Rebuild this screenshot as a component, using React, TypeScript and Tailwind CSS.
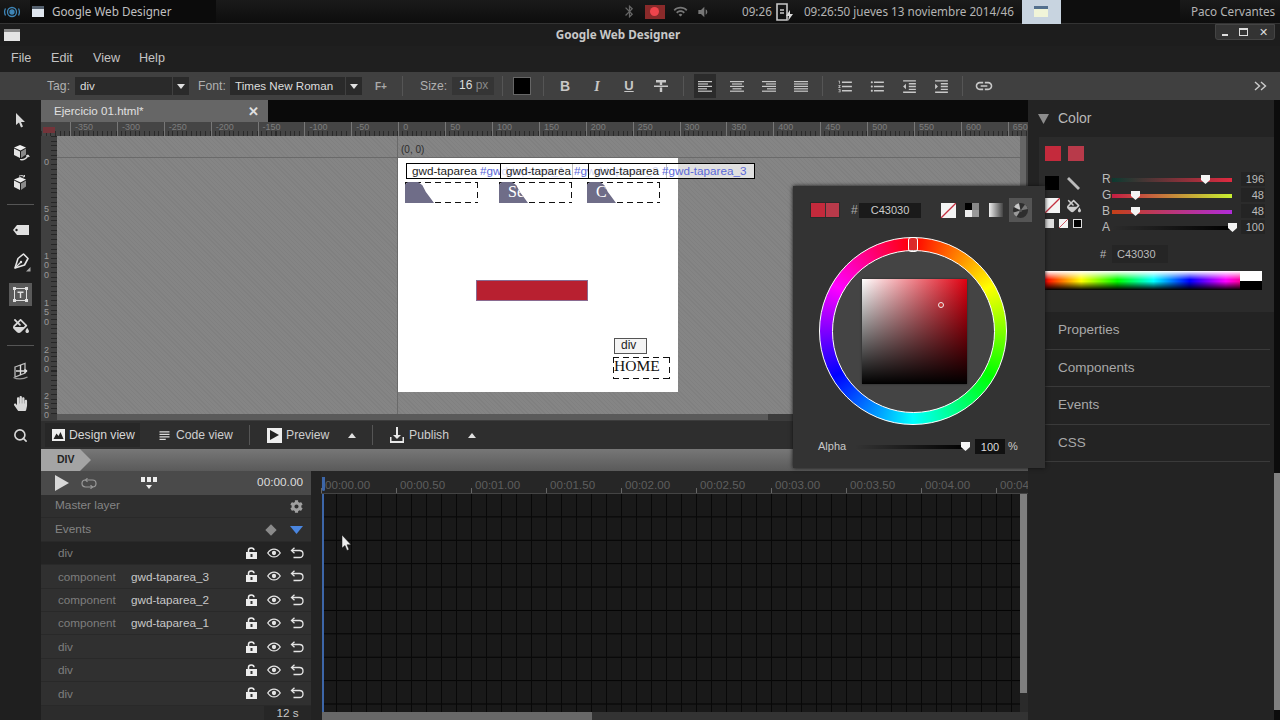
import React from "react";
import { FaFillDrip, FaHandPaper, FaCog } from "react-icons/fa";
import { MdLink, MdFormatListBulleted, MdFormatListNumbered, MdFormatIndentDecrease, MdFormatIndentIncrease, MdBluetooth, MdWifi, MdVolumeDown, MdSubject } from "react-icons/md";
import { Search } from "lucide-react";

const Sep = ({ cls = "" }: { cls?: string }) => <div className={"w-px h-[20px] bg-[#555] shrink-0 " + cls} />;

const Caret = ({ up = false, cls = "" }: { up?: boolean; cls?: string }) => (
  <svg width="8" height="5" viewBox="0 0 8 5" className={cls}>
    <path d={up ? "M0 5L4 0L8 5Z" : "M0 0L8 0L4 5Z"} fill="#e0e0e0" />
  </svg>
);

const Lines = ({ kind }: { kind: "l" | "c" | "r" | "j" }) => {
  const rows = [0, 1, 2, 3, 4];
  const widths = kind === "j" ? [14, 14, 14, 14, 14] : [14, 10, 14, 9, 14];
  return (
    <svg width="14" height="11" viewBox="0 0 14 11">
      {rows.map((r) => {
        const w = widths[r];
        const x = kind === "l" || kind === "j" ? 0 : kind === "r" ? 14 - w : (14 - w) / 2;
        return <rect key={r} x={x} y={r * 2.4} width={w} height="1.2" fill="#c8c8c8" />;
      })}
    </svg>
  );
};

const ToolBtn = ({ children }: { children: React.ReactNode }) => (
  <div className="w-[32px] h-[28px] shrink-0 flex items-center justify-center text-[#c8c8c8]">{children}</div>
);

const Tool = ({ children, active = false }: { children: React.ReactNode; active?: boolean }) => (
  <div className="h-[32px] w-[41px] flex items-center justify-center text-[#d8d8d8]">
    <div className={"w-[23px] h-[23px] flex items-center justify-center " + (active ? "bg-[#5a5a5a]" : "")}>{children}</div>
  </div>
);

const NoneSwatch = ({ cls }: { cls: string }) => (
  <svg viewBox="0 0 16 16" className={cls}>
    <rect width="16" height="16" fill="#f4f4f4" />
    <path d="M0 16L16 0" stroke="#c43040" strokeWidth="1.4" />
  </svg>
);

const Cube = ({ arrow }: { arrow: "bottom" | "top" }) => (
  <svg width="18" height="18" viewBox="0 0 18 18" fill="none">
    <path d="M2 4.5L8 2L14 4.5L8.5 7.5Z" fill="#f0f0f0" />
    <path d="M2 5.5L8 8.5V15L2 12Z" fill="#e4e4e4" />
    <path d="M9 8.5L14 5.5V11.5L9 15Z" fill="#8a8a8a" />
    {arrow === "bottom" ? (
      <path d="M8 16.5C11.5 17.5 15 15.5 16 12M16 12L14.2 13.2M16 12L17.2 14" stroke="#e0e0e0" strokeWidth="1.3" />
    ) : (
      <path d="M7 1.2C9 .2 11 .5 12.5 1.6M12.5 1.6L10.8 2M12.5 1.6L12.4 0" stroke="#e0e0e0" strokeWidth="1" />
    )}
  </svg>
);

const Pen = () => (
  <svg width="20" height="20" viewBox="0 0 20 20" fill="none">
    <path d="M12.5 2L17 6.5L13.5 13L4 16L7 6.5Z" stroke="#e4e4e4" strokeWidth="1.6" strokeLinejoin="round" />
    <path d="M4 16L9.5 10.5" stroke="#e4e4e4" strokeWidth="1.2" />
    <circle cx="10" cy="10" r="1.2" fill="#e4e4e4" />
    <path d="M19.5 15V19.5H15Z" fill="#aaa" />
  </svg>
);

const Stage = () => (
  <svg width="18" height="18" viewBox="0 0 18 18" fill="none">
    <path d="M3 5L13 1.5V11L3 15Z" stroke="#bbb" strokeWidth="1.3" />
    <path d="M8.5 3V13M4 9H15M15 9L12.5 7.2M15 9L12.5 10.8" stroke="#ddd" strokeWidth="1.4" />
    <path d="M1.5 15.5C5 17.5 11 17.5 15.5 15" stroke="#999" strokeWidth="1.3" />
  </svg>
);

const Lock = () => (
  <svg width="11" height="12" viewBox="0 0 11 12" fill="none">
    <path d="M2.5 5.5V3.3C2.5 1.8 3.8 1 5.3 1C6.8 1 8 1.8 8 3.3" stroke="#ececec" strokeWidth="1.5" />
    <path d="M0 5H11V12H0Z" fill="#ececec" />
    <rect x="4.5" y="7" width="2" height="3" fill="#333" />
  </svg>
);

const Eye = () => (
  <svg width="15" height="10" viewBox="0 0 15 10" fill="none">
    <path d="M.8 5C2.8 2 5 .8 7.5 .8C10 .8 12.2 2 14.2 5C12.2 8 10 9.2 7.5 9.2C5 9.2 2.8 8 .8 5Z" stroke="#e4e4e4" strokeWidth="1.4" />
    <circle cx="7.5" cy="5" r="2.3" fill="#e4e4e4" />
  </svg>
);

const Back = () => (
  <svg width="14" height="12" viewBox="0 0 14 12" fill="none">
    <path d="M2 3.5H9.5C11.5 3.5 13 5 13 7C13 9 11.5 10.5 9.5 10.5H3.5" stroke="#e4e4e4" strokeWidth="1.3" />
    <path d="M4.5 .8L1.5 3.5L4.5 6.2" stroke="#e4e4e4" strokeWidth="1.3" />
  </svg>
);

const topLabels = ["-350", "-300", "-250", "-200", "-150", "-100", "-50", "0", "50", "100", "150", "200", "250", "300", "350", "400", "450", "500", "550", "600", "650"];
const leftLabels = ["0", "50", "100", "150", "200", "250"];
const timeLabels = ["00:00.00", "00:00.50", "00:01.00", "00:01.50", "00:02.00", "00:02.50", "00:03.00", "00:03.50", "00:04.00"];
const layers = [
  ["div", "", true],
  ["component", "gwd-taparea_3", false],
  ["component", "gwd-taparea_2", false],
  ["component", "gwd-taparea_1", false],
  ["div", "", false],
  ["div", "", false],
  ["div", "", false],
] as const;

const sliders = [
  { l: "R", v: "196", g: "bg-[linear-gradient(to_right,#0c3a30,#e02a40)]", p: "left-[89px]" },
  { l: "G", v: "48", g: "bg-[linear-gradient(to_right,#c41c44,#c8f030)]", p: "left-[19px]" },
  { l: "B", v: "48", g: "bg-[linear-gradient(to_right,#c44018,#b02cd8)]", p: "left-[19px]" },
  { l: "A", v: "100", g: "bg-[linear-gradient(to_right,transparent,#000)]", p: "left-[116px]" },
];

const Thumb = ({ cls = "" }: { cls?: string }) => (
  <svg width="9" height="9" viewBox="0 0 9 9" className={cls}>
    <path d="M0 0H9V5L4.5 9L0 5Z" fill="#f4f4f4" />
  </svg>
);

const dashed =
  "bg-[linear-gradient(to_right,#111_6px,transparent_6px),linear-gradient(to_right,#111_6px,transparent_6px),linear-gradient(to_bottom,#111_6px,transparent_6px),linear-gradient(to_bottom,#111_6px,transparent_6px)] [background-size:10px_1px,10px_1px,1px_10px,1px_10px] [background-position:0_0,0_100%,0_0,100%_0] [background-repeat:repeat-x,repeat-x,repeat-y,repeat-y]";

function CanvasLabel({ x, name, id }: { x: string; name: string; id: string }) {
  return (
    <div className={"absolute top-[27px] w-[167px] h-[16px] border border-black bg-white/75 flex items-center pl-[5px] text-[11.7px] whitespace-nowrap overflow-hidden " + x}>
      <span className="text-[#222]">{name}</span>
      <span className="text-[#5a68d8] ml-[3px]">{id}</span>
    </div>
  );
}

function DashBox({ x, t }: { x: string; t: string }) {
  return (
    <div className={"absolute top-[46px] w-[73px] h-[21px] " + dashed + " " + x}>
      <div className="w-[29px] h-[21px] bg-[#6f6d88] [clip-path:polygon(0_12%,10%_0,45%_0,60%_15%,72%_48%,85%_72%,100%_100%,0_100%)] text-white text-[16px] pl-[9px] leading-[20px] font-['Liberation_Serif',serif] overflow-hidden">{t}</div>
    </div>
  );
}

export default function App() {
  return (
    <div className="relative w-[1280px] h-[720px] overflow-hidden bg-[#1e1e1e] flex flex-col font-['Liberation_Sans',Arial,sans-serif] text-[#ccc]">
      {/* OS panel */}
      <div className="h-[24px] shrink-0 flex items-center bg-[linear-gradient(to_bottom,#1a1a1a,#0d0d0d)] border-b border-[#333] font-['Noto_Sans',sans-serif] text-[11.7px] text-[#b4b4b4]">
        <div className="w-[30px] flex justify-center pr-[6px]">
          <svg width="18" height="18" viewBox="0 0 18 18" fill="none" stroke="#3f86b8" strokeWidth="1.3">
            <circle cx="9" cy="9" r="2" fill="#3f86b8" />
            <circle cx="9" cy="9" r="4.5" />
            <path d="M2.5 5.5A7.5 7.5 0 0 0 2.5 12.5M15.5 5.5A7.5 7.5 0 0 1 15.5 12.5" />
          </svg>
        </div>
        <div className="w-[186px] h-full bg-[#0b0b0b] flex items-center pl-[2px]">
          <div className="w-[12px] h-[11px] bg-[#dfe6ee] border-t-[3px] border-[#54606e]" />
          <span className="ml-[8px] text-[#c0c0c0]">Google Web Designer</span>
        </div>
        <div className="ml-[406px] flex items-center w-[66px] justify-between">
          <MdBluetooth size={15} color="#666" />
          <div className="w-[20px] h-[14px] bg-[#8a2a2a] flex items-center justify-center -ml-[1px]"><div className="w-[9px] h-[9px] rounded-full bg-[#f0444c]" /></div>
          <MdWifi size={15} color="#777" />
        </div>
        <MdVolumeDown size={16} color="#777" className="ml-[7px]" />
        <span className="ml-[31px]">09:26</span>
        <svg width="20" height="20" viewBox="0 0 20 20" fill="none" className="ml-[3px]">
          <path d="M2 2H12V18H2Z" stroke="#c8c8c8" strokeWidth="1.6" />
          <path d="M5 8H9M5 11H9" stroke="#c8c8c8" strokeWidth="1.5" />
          <path d="M15 8L11 14H14L13 19L18 12H15Z" fill="#d8d8d8" />
        </svg>
        <span className="ml-[9px] w-[214px] whitespace-nowrap">09:26:50 jueves 13 noviembre 2014/46</span>
        <div className="ml-[4px] w-[39px] h-[24px] bg-[#c8d4e0] flex items-center justify-center">
          <div className="w-[14px] h-[11px] bg-[#f0f4d8] border-t-[3px] border-[#54708e]" />
        </div>
        <div className="w-[119px] h-full bg-[#0e0e0e]" />
        <span className="ml-[11px] w-[88px] overflow-hidden whitespace-nowrap">Paco Cervantes</span>
      </div>

      {/* Title bar */}
      <div className="relative h-[22px] shrink-0 flex items-center justify-center bg-[#1d1d1d] pr-[44px]">
        <div className="absolute left-[4px] top-[5px] w-[16px] h-[12px] bg-[#e4e4e4] border-t-[3px] border-[#8a8a8a]" />
        <span className="text-[11.7px] font-bold text-[#c8c8c8] font-['Noto_Sans',sans-serif]">Google Web Designer</span>
        <div className="absolute left-[1215px] top-0 w-[60px] h-[16px] bg-[#333] border border-[#444] rounded-b-[3px] flex items-center justify-around text-[#ddd] text-[11px]">
          <div className="w-[6px] h-[2px] bg-[#ddd] mt-[5px]" />
          <div className="w-[9px] h-[8px] border border-[#ddd] border-t-2" />
          <span className="leading-none">✕</span>
        </div>
      </div>

      {/* Menu */}
      <div className="h-[26px] shrink-0 flex items-center bg-[#1f1f1f] text-[12.6px] text-[#c4c4c4] pb-[2px]">
        <span className="ml-[11px] w-[40px]">File</span>
        <span className="w-[42px]">Edit</span>
        <span className="w-[46px]">View</span>
        <span>Help</span>
      </div>

      {/* Toolbar */}
      <div className="h-[28px] shrink-0 flex items-center bg-[#404040] text-[12.2px] text-[#b0b0b0]">
        <span className="ml-[47px] w-[28px]">Tag:</span>
        <div className="w-[114px] h-[18px] flex">
          <div className="flex-1 bg-[#2a2a2a] pl-[5px] text-[#ddd] leading-[18px] text-[11.6px]">div</div>
          <div className="w-[16px] ml-px bg-[#2a2a2a] flex items-center justify-center"><Caret /></div>
        </div>
        <span className="ml-[9px] w-[32px]">Font:</span>
        <div className="w-[132px] h-[18px] flex">
          <div className="flex-1 bg-[#2a2a2a] pl-[5px] text-[#ddd] leading-[18px] text-[11.6px]">Times New Roman</div>
          <div className="w-[16px] ml-px bg-[#2a2a2a] flex items-center justify-center"><Caret /></div>
        </div>
        <span className="w-[38px] text-center text-[10px] font-bold text-[#aaa]">F+</span>
        <Sep cls="ml-[2px]" />
        <span className="ml-[17px] w-[32px]">Size:</span>
        <div className="w-[42px] h-[18px] bg-[#353535] pl-[7px] text-[12px] leading-[17px] text-[#ddd]">16 <span className="text-[#888]">px</span></div>
        <Sep cls="ml-[8px]" />
        <div className="ml-[10px] w-[18px] h-[18px] bg-black border border-[#666]" />
        <Sep cls="ml-[12px]" />
        <div className="ml-[5px] flex">
          <ToolBtn><span className="font-bold text-[14px]">B</span></ToolBtn>
          <ToolBtn><span className="italic font-bold text-[14px] font-['Liberation_Serif',serif]">I</span></ToolBtn>
          <ToolBtn><span className="underline font-bold text-[13px]">U</span></ToolBtn>
          <ToolBtn>
            <svg width="14" height="14" viewBox="0 0 14 14" fill="#c8c8c8"><path d="M2 1H12V3.5H8.2V6H5.8V3.5H2ZM0 6.5H14V8H0ZM5.8 8.5H8.2V13H5.8Z" /></svg>
          </ToolBtn>
        </div>
        <Sep cls="ml-[6px]" />
        <div className="ml-[5px] flex">
          <ToolBtn><div className="w-[22px] h-[24px] bg-[#2b2b2b] flex items-center justify-center"><Lines kind="l" /></div></ToolBtn>
          <ToolBtn><Lines kind="c" /></ToolBtn>
          <ToolBtn><Lines kind="r" /></ToolBtn>
          <ToolBtn><Lines kind="j" /></ToolBtn>
        </div>
        <Sep cls="ml-[5px]" />
        <div className="ml-[6px] flex">
          <ToolBtn><MdFormatListNumbered size={17} /></ToolBtn>
          <ToolBtn><MdFormatListBulleted size={17} /></ToolBtn>
          <ToolBtn><MdFormatIndentDecrease size={17} /></ToolBtn>
          <ToolBtn><MdFormatIndentIncrease size={17} /></ToolBtn>
        </div>
        <Sep cls="ml-[5px]" />
        <div className="ml-[5px]"><ToolBtn><MdLink size={20} /></ToolBtn></div>
        <svg width="13" height="10" viewBox="0 0 13 10" fill="none" stroke="#ccc" strokeWidth="1.4" className="ml-auto mr-[13px]">
          <path d="M1 1L5.5 5L1 9M7 1L11.5 5L7 9" />
        </svg>
      </div>

      {/* Main */}
      <div className="flex-1 flex min-h-0">
        {/* Left tools */}
        <div className="w-[41px] shrink-0 bg-[#1f1f1f] pt-[4px] flex flex-col items-center">
          <Tool><svg width="13" height="15" viewBox="0 0 13 15"><path d="M2 0V12L5 9.5L7 14.5L9 13.5L7 9H11Z" fill="#d8d8d8" /></svg></Tool>
          <Tool><Cube arrow="bottom" /></Tool>
          <Tool><Cube arrow="top" /></Tool>
          <div className="w-[27px] h-px bg-[#555] mt-[4px] mb-[9px]" />
          <Tool><svg width="16" height="10" viewBox="0 0 16 10"><path d="M4 0H16V10H4L0 5Z" fill="#e0e0e0" /><circle cx="3.5" cy="5" r="1.2" fill="#1f1f1f" /></svg></Tool>
          <Tool><Pen /></Tool>
          <Tool active>
            <svg width="15" height="15" viewBox="0 0 15 15" fill="none">
              <rect x="1.5" y="1.5" width="12" height="12" stroke="#e0e0e0" />
              <rect x="0" y="0" width="3" height="3" fill="#e0e0e0" /><rect x="12" y="0" width="3" height="3" fill="#e0e0e0" />
              <rect x="0" y="12" width="3" height="3" fill="#e0e0e0" /><rect x="12" y="12" width="3" height="3" fill="#e0e0e0" />
              <path d="M4.5 4.5H10.5V6H8.2V11H6.8V6H4.5Z" fill="#e0e0e0" />
            </svg>
          </Tool>
          <Tool><FaFillDrip size={16} /></Tool>
          <div className="w-[27px] h-px bg-[#555] mt-[3px] mb-[9px]" />
          <Tool><Stage /></Tool>
          <Tool><FaHandPaper size={15} /></Tool>
          <Tool><Search size={15} strokeWidth={2.6} /></Tool>
        </div>

        {/* Center */}
        <div className="w-[987px] shrink-0 flex flex-col min-h-0">
          {/* Tabs */}
          <div className="h-[22px] shrink-0 bg-[#0a0a0a] flex">
            <div className="w-[227px] bg-[#666] flex items-center justify-between pl-[13px] pr-[9px] text-[11.6px] text-[#e0e0e0]">
              <span>Ejercicio 01.html*</span>
              <span className="font-bold text-[13px] leading-none">✕</span>
            </div>
            <div className="flex-1" />
          </div>
          {/* Ruler */}
          <div className="h-[14px] shrink-0 flex bg-[#454545] bg-[repeating-linear-gradient(to_right,#2a2a2a_0,#2a2a2a_1px,transparent_1px,transparent_4.69px)] bg-[size:100%_5px] bg-no-repeat bg-bottom overflow-hidden">
            <div className="w-[29px] shrink-0 pl-[2px] pt-[5px]"><div className="w-[12px] h-[6px] bg-[#74343a]" /></div>
            {topLabels.map((t) => (
              <div key={t} className="w-[46.9px] shrink-0 border-l border-[#777] pl-[4px] text-[9px] leading-[11px] text-[#7e7e7e]">{t}</div>
            ))}
          </div>
          {/* Canvas row */}
          <div className="h-[278px] shrink-0 flex">
            <div className="relative z-10 w-[16px] shrink-0 bg-[#404040] bg-[repeating-linear-gradient(to_bottom,#262626_0,#262626_1px,transparent_1px,transparent_4.69px)] bg-[size:6px_100%] bg-no-repeat bg-right pt-[22px] flex flex-col">
              {leftLabels.map((t) => (
                <div key={t} className="h-[46.9px] shrink-0 pl-[3px] text-[9px] leading-[9.5px] text-[#9a9a9a] flex flex-col">
                  {t.split("").map((c, i) => <span key={i}>{c}</span>)}
                </div>
              ))}
            </div>
            <div className="relative flex-1 overflow-visible bg-[#838383] bg-[repeating-linear-gradient(45deg,#808080_0,#808080_1px,#858585_1px,#858585_3px)]">
              <div className="absolute left-0 right-0 top-[21px] h-px bg-[#6a6a6a]" />
              <div className="absolute top-0 bottom-0 left-[340px] w-px bg-[#6a6a6a]" />
              <span className="absolute left-[344px] top-[6px] text-[10px] text-[#2e2e2e]">(0, 0)</span>
              <div className="absolute left-[341px] top-[22px] w-[280px] h-[234px] bg-white" />
              <CanvasLabel x="left-[349px]" name="gwd-taparea" id="#gwd-taparea_1" />
              <CanvasLabel x="left-[443px]" name="gwd-taparea" id="#gwd-taparea_2" />
              <CanvasLabel x="left-[531px]" name="gwd-taparea" id="#gwd-taparea_3" />
              <DashBox x="left-[348px]" t="" />
              <DashBox x="left-[442px]" t="Se" />
              <DashBox x="left-[530px]" t="C" />
              <div className="absolute left-[419px] top-[144px] w-[112px] h-[21px] bg-[#b82030] border border-[#8a6a90]" />
              <div className="absolute left-[557px] top-[202px] w-[33px] h-[16px] bg-[#f4f4f4] border border-[#555] text-[12px] text-[#222] pl-[6px] leading-[13px]">div</div>
              <div className={"absolute left-[556px] top-[221px] w-[57px] h-[22px] text-[15.5px] text-[#111] leading-[18px] pl-px font-['Liberation_Serif',serif] " + dashed}>HOME</div>
              <div className="absolute right-0 top-0 bottom-0 w-[8px] bg-[#444]"><div className="w-[6px] h-[150px] bg-[#666]" /></div>
            </div>
          </div>
          {/* h scrollbar */}
          <div className="h-[7px] shrink-0 bg-[#3c3c3c] pl-[16px]"><div className="w-[711px] h-[6px] bg-[#5a5a5a]" /></div>

          {/* View bar */}
          <div className="h-[28px] shrink-0 flex items-center bg-[#2e2e2e] text-[12.2px] text-[#cfcfcf] whitespace-nowrap">
            <div className="ml-[4px] w-[95px] h-[24px] bg-[#272727] flex items-center pl-[7px]">
              <svg width="13" height="12" viewBox="0 0 13 12" className="shrink-0">
                <rect width="13" height="12" fill="#eee" />
                <path d="M1.5 10L4.5 4.5L6.5 7L8.5 3L11.5 10Z" fill="#222" />
              </svg>
              <span className="ml-[4px] text-[#d8d8d8]">Design view</span>
            </div>
            <MdSubject size={15} className="ml-[17px] text-[#ddd] shrink-0" />
            <span className="ml-[4px] w-[73px]">Code view</span>
            <Sep />
            <div className="ml-[17px] w-[15px] h-[15px] bg-[#eee] flex items-center justify-center">
              <svg width="9" height="10" viewBox="0 0 9 10"><path d="M0 0L9 5L0 10Z" fill="#222" /></svg>
            </div>
            <span className="ml-[4px] w-[62px]">Preview</span>
            <Caret up />
            <Sep cls="ml-[16px]" />
            <svg width="16" height="16" viewBox="0 0 16 16" className="ml-[16px]" fill="#e8e8e8">
              <path d="M7 0H9V8H12L8 12L4 8H7Z" />
              <path d="M1 10H2.5V14H13.5V10H15V16H1Z" />
            </svg>
            <span className="ml-[4px] w-[59px]">Publish</span>
            <Caret up />
          </div>

          {/* Breadcrumb */}
          <div className="h-[22px] shrink-0 bg-[linear-gradient(to_bottom,#777,#5a5a5a)] flex">
            <div className="w-[50px] h-full bg-[#a4a4a4] [clip-path:polygon(0_0,78%_0,100%_50%,78%_100%,0_100%)] flex items-center pl-[16px] text-[10.5px] font-bold text-[#222]">DIV</div>
          </div>

          {/* Timeline */}
          <div className="flex-1 flex min-h-0 bg-[#2a2a2a]">
            <div className="w-[270px] shrink-0 flex flex-col min-h-0">
              <div className="h-[24px] shrink-0 bg-[#4a4a4a] flex items-center">
                <svg width="16" height="16" viewBox="0 0 16 16" className="ml-[13px]"><path d="M1 0L15 8L1 16Z" fill="#d8d8d8" /></svg>
                <svg width="16" height="11" viewBox="0 0 16 11" fill="none" stroke="#999" strokeWidth="1.2" className="ml-[11px]">
                  <path d="M5 2H11.5C13.5 2 15 3.5 15 5.5C15 7.5 13.5 9 11.5 9H9M11 9H4.5C2.5 9 1 7.5 1 5.5C1 3.5 2.5 2 4.5 2" />
                  <path d="M6.5 .3L4.5 2L6.5 3.7M9.5 7.3L11.5 9L9.5 10.7" />
                </svg>
                <svg width="16" height="12" viewBox="0 0 16 12" className="ml-[44px]" fill="#eee"><rect width="4" height="5" /><rect x="6" width="4" height="5" /><rect x="12" width="4" height="5" /><path d="M5 8H11L8 12Z" /></svg>
                <span className="ml-auto mr-[8px] text-[11.8px] text-[#dcdcdc]">00:00.00</span>
              </div>
              <div className="h-[23.4px] shrink-0 bg-[#2f2f2f] border-b border-[#292929] flex items-center pl-[14px] text-[11.8px] text-[#858585]">
                <span>Master layer</span>
                <FaCog size={13} className="ml-auto mr-[8px] text-[#a0a0a0]" />
              </div>
              <div className="h-[23.4px] shrink-0 bg-[#2f2f2f] border-b border-[#292929] flex items-center pl-[14px] text-[11.8px] text-[#858585]">
                <span>Events</span>
                <div className="ml-auto w-[8px] h-[8px] rotate-45 bg-[#8a8a8a] mr-[15px]" />
                <svg width="13" height="8" viewBox="0 0 13 8" className="mr-[8px]"><path d="M0 0H13L6.5 8Z" fill="#4a86e0" /></svg>
              </div>
              {layers.map(([tag, name, sel], i) => (
                <div key={i} className={"h-[23.4px] shrink-0 border-b border-[#292929] flex items-center pl-[17px] text-[11.7px] " + (sel ? "bg-[#232323]" : "bg-[#303030]")}>
                  <span className="w-[73px] text-[#7e7e7e]">{tag}</span>
                  <span className="w-[114px] text-[#c8c8c8]">{name}</span>
                  <div className="w-[12px] flex justify-center"><Lock /></div>
                  <div className="ml-[10px] w-[14px] flex justify-center"><Eye /></div>
                  <div className="ml-[8px] w-[16px] flex justify-center"><Back /></div>
                </div>
              ))}
              <div className="flex-1 flex justify-end bg-[#2c2c2c] min-h-0">
                <div className="w-[47px] h-full bg-[#262626] text-[11.7px] leading-[14px] text-[#c8c8c8] text-center">12 s</div>
              </div>
            </div>
            <div className="w-[11px] shrink-0 bg-[#222]" />
            <div className="relative w-[706px] shrink-0 flex flex-col min-h-0">
              <div className="h-[23px] shrink-0 flex bg-[#262626] border-b border-[#444] overflow-hidden -ml-px pr-px">
                {timeLabels.map((t) => (
                  <div key={t} className="w-[75px] shrink-0 pt-[5px] pl-[4px] text-[11.6px] text-[#5e5e5e] whitespace-nowrap bg-[linear-gradient(#666,#666)] bg-[size:1px_5px] bg-no-repeat bg-[position:0_100%]">{t}</div>
                ))}
                <div className="w-[32px] shrink-0 pt-[5px] pl-[4px] text-[11.6px] text-[#5e5e5e] whitespace-nowrap bg-[linear-gradient(#666,#666)] bg-[size:1px_5px] bg-no-repeat bg-[position:0_100%]">00:04</div>
              </div>
              <div className="absolute left-0 top-[6px] w-[3px] h-[14px] bg-[#3d66a8] rounded-b-[2px]" />
              <div className="flex-1 flex min-h-0">
                <div className="w-[698px] h-[218px] shrink-0 border-l-2 border-[#3d66a8] bg-[#191919] bg-[linear-gradient(to_right,#080808_1px,transparent_1px),linear-gradient(to_bottom,#030303_1px,transparent_1px)] bg-[size:15px_23.4px] bg-[position:12px_-1px]" />
                <div className="w-[7px] h-[199px] bg-[#7e7e7e]" />
              </div>
              <div className="h-[8px] shrink-0 bg-[#333]"><div className="w-[270px] h-full bg-[#686868]" /></div>
            </div>
          </div>
        </div>

        {/* Right panel */}
        <div className="w-[246px] shrink-0 bg-[#232323] flex flex-col">
          <div className="h-[37px] shrink-0 flex items-center pl-[10px] text-[#b8b8b8] text-[14px]">
            <svg width="11" height="10" viewBox="0 0 11 10"><path d="M0 0H11L5.5 10Z" fill="#8c8c8c" /></svg>
            <span className="ml-[9px]">Color</span>
          </div>
          <div className="h-[175px] shrink-0 ml-[11px] bg-[#2b2b2b] pl-[6px] pt-[9px] flex flex-col text-[#bbb]">
            <div className="flex gap-[7px]">
              <div className="w-[16px] h-[15px] bg-[#c42a3c]" />
              <div className="w-[16px] h-[15px] bg-[#b83a4a]" />
            </div>
            <div className="mt-[11px] flex">
              <div className="w-[57px] flex flex-col">
                <div className="flex items-center mt-[4px]">
                  <div className="w-[14px] h-[14px] bg-black" />
                  <svg width="14" height="14" viewBox="0 0 14 14" className="ml-[8px]"><path d="M2 1L13 12L11 14L0 3Z" fill="#bbb" /></svg>
                </div>
                <div className="flex items-center mt-[8px]">
                  <NoneSwatch cls="w-[15px] h-[15px]" />
                  <FaFillDrip size={14} className="ml-[7px] text-[#ccc]" />
                </div>
                <div className="flex items-center gap-[5px] mt-[6px]">
                  <div className="w-[9px] h-[9px] bg-[#ddd]" />
                  <NoneSwatch cls="w-[9px] h-[9px]" />
                  <div className="w-[9px] h-[9px] bg-black border border-[#ddd]" />
                </div>
              </div>
              <div className="flex flex-col">
                {sliders.map((s) => (
                  <div key={s.l} className="h-[16px] flex items-center">
                    <span className="w-[10px] text-[12px] -mt-[3px]">{s.l}</span>
                    <div className={"relative w-[120px] h-[4px] " + s.g}>
                      <Thumb cls={"absolute -top-[3px] " + s.p} />
                    </div>
                    <div className="ml-[9px] w-[24px] h-[14px] bg-[#242424] text-[11px] text-right pr-[1px] leading-[14px] -mt-[3px]">{s.v}</div>
                  </div>
                ))}
              </div>
            </div>
            <div className="mt-[9px] ml-[55px] flex items-center text-[11px]">
              <span className="w-[12px]">#</span>
              <div className="w-[56px] h-[18px] bg-[#252525] pl-[5px] leading-[18px]">C43030</div>
            </div>
            <div className="relative mt-[8px] w-[217px] h-[19px] bg-[linear-gradient(to_bottom,#fff,transparent_45%,transparent_55%,#000),linear-gradient(to_right,#f00,#ff0,#0f0,#0ff,#00f,#f0f,#f00)]">
              <div className="absolute right-0 top-0 w-[22px] h-[10px] bg-white" />
              <div className="absolute right-0 bottom-0 w-[22px] h-[9px] bg-black" />
            </div>
          </div>
          {["Properties", "Components", "Events", "CSS"].map((t) => (
            <div key={t} className="h-[37.5px] shrink-0 ml-[11px] mr-[4px] border-b border-[#3a3a3a] flex items-center pl-[19px] text-[13.5px] text-[#a8a8a8]">{t}</div>
          ))}
        </div>
        <div className="flex-1 flex flex-col bg-[#0c0c0c]">
          <div className="h-[373px] shrink-0" />
          <div className="h-[237px] bg-[#808080]" />
        </div>
      </div>

      {/* Color popup */}
      <div className="absolute left-[793px] top-[186px] w-[252px] h-[282px] bg-[#333] shadow-[0_0_4px_#111] flex flex-col text-[#ccc]">
        <div className="mt-[12px] h-[24px] flex items-center pl-[17px]">
          <div className="flex gap-px w-[30px] h-[16px] border border-[#2a2a2a]">
            <div className="flex-1 bg-[#c42a3c]" /><div className="flex-1 bg-[#b83a4a]" />
          </div>
          <span className="ml-[11px] w-[8px] text-[12px] text-[#aaa]">#</span>
          <div className="w-[62px] h-[15px] bg-[#1a1a1a] text-[11px] text-[#ccc] text-center leading-[15px]">C43030</div>
          <NoneSwatch cls="ml-[20px] w-[15px] h-[15px]" />
          <div className="ml-[9px] w-[14px] h-[14px] grid grid-cols-2 grid-rows-2">
            <div className="bg-black" /><div className="bg-[#888]" /><div className="bg-[#eee]" /><div className="bg-[#999]" />
          </div>
          <div className="ml-[10px] w-[14px] h-[14px] bg-[linear-gradient(to_right,#eee,#444)]" />
          <div className="ml-[6px] w-[23px] h-[24px] bg-[#555] flex items-center justify-center">
            <svg width="15" height="15" viewBox="0 0 15 15">
              <circle cx="7.5" cy="7.5" r="7.5" fill="#2e2e2e" />
              <path d="M7.5 7.5L1 4A7.5 7.5 0 0 1 6 .2Z" fill="#c8c8c8" />
              <path d="M7.5 7.5L.3 9.5A7.5 7.5 0 0 0 3.5 13.8Z" fill="#9a9a9a" />
              <path d="M7.5 7.5L14.8 6A7.5 7.5 0 0 0 12 1.5Z" fill="#777" />
              <circle cx="7.5" cy="7.5" r="1.6" fill="#555" />
            </svg>
          </div>
        </div>
        <div className="relative ml-[26px] mt-[15px] w-[188px] h-[188px] rounded-full border border-white bg-[conic-gradient(#f00,#ff0,#0f0,#0ff,#00f,#f0f,#f00)] flex items-center justify-center">
          <div className="w-[163px] h-[163px] rounded-full border border-white bg-[#444] flex items-center justify-center">
            <div className="relative ml-[2px] w-[105px] h-[105px] bg-[linear-gradient(to_bottom,transparent,#000),linear-gradient(to_right,#fff,#e00010)] shadow-[0_0_2px_#222]">
              <div className="absolute left-[76px] top-[23px] w-[6px] h-[6px] rounded-full border border-[#eee] bg-[#c43030]" />
            </div>
          </div>
          <div className="absolute left-[88px] -top-px w-[10px] h-[15px] rounded-[3px] border border-white bg-[#888]/30" />
        </div>
        <div className="mt-[14px] h-[15px] flex items-center pl-[25px] text-[11px]">
          <span className="w-[37px] text-[#c8c8c8]">Alpha</span>
          <div className="relative w-[113px] h-[4px] bg-[linear-gradient(to_right,transparent,#000)]">
            <Thumb cls="absolute -right-[2px] -top-[3px]" />
          </div>
          <div className="ml-[7px] w-[30px] h-[15px] bg-[#111] text-center leading-[16px] text-[#ddd]">100</div>
          <span className="ml-[3px]">%</span>
        </div>
      </div>

      {/* Mouse pointer */}
      <svg width="11" height="16" viewBox="0 0 11 16" className="absolute left-[341px] top-[535px]">
        <path d="M1 0V13L4 10.5L6 15.5L8 14.5L6 9.8H10Z" fill="#eee" stroke="#111" strokeWidth="0.5" />
      </svg>
    </div>
  );
}
